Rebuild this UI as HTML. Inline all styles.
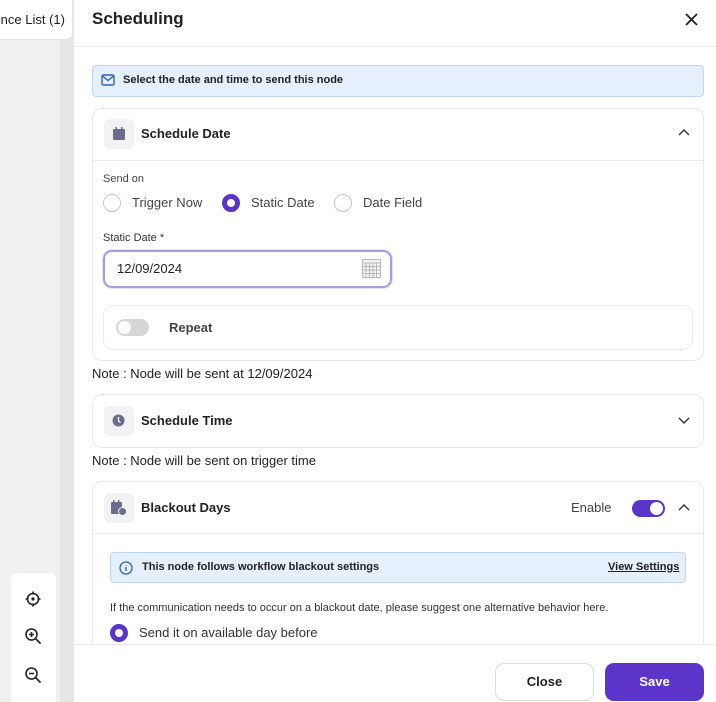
<!DOCTYPE html>
<html><head><meta charset="utf-8"><style>
*{box-sizing:border-box;margin:0;padding:0}
html,body{width:716px;height:702px;overflow:hidden}
body{background:#f0f0f0;font-family:"Liberation Sans",sans-serif;color:#222;position:relative}
.abs{position:absolute}
.card{position:absolute;left:92px;width:612px;border:1px solid #e8e8ec;border-radius:10px;background:#fff}
.ib{position:absolute;width:30px;height:30px;border-radius:6px;background:#f2f2f5}
.t{position:absolute;font-size:13px;font-weight:bold;color:#222}
.radio{position:absolute;width:18px;height:18px;border-radius:50%;border:1.5px solid #c8c8c8;background:#fff}
.radio.on{border:5px solid #5b35c9}
.lbl{position:absolute;font-size:13px;color:#444}
</style></head><body>
<div class="abs" style="left:60px;top:0;width:14px;height:702px;background:#e6e6e6"></div>
<div class="abs" style="left:0;top:0;width:72px;height:40px;background:#fff;border-radius:0 0 6px 0;border-bottom:1px solid #e2e2e2"></div>
<div class="abs" style="right:651px;top:12px;font-size:13px;color:#222;white-space:nowrap">ence List (1)</div>
<div class="abs" style="left:11px;top:573px;width:45px;height:135px;background:#fff;border-radius:6px"></div>
<svg class="abs" style="left:24px;top:590px" width="18" height="18" viewBox="0 0 18 18" fill="none" stroke="#222" stroke-width="1.6"><circle cx="9" cy="9" r="5.5"/><path d="M9 1.5v3M9 13.5v3M1.5 9h3M13.5 9h3"/><circle cx="9" cy="9" r="0.8" fill="#222"/></svg>
<svg class="abs" style="left:24px;top:627px" width="18" height="18" viewBox="0 0 18 18" fill="none" stroke="#222" stroke-width="1.6"><circle cx="7.5" cy="7.5" r="5.5"/><path d="M11.5 11.5l5 5M5 7.5h5M7.5 5v5"/></svg>
<svg class="abs" style="left:24px;top:666px" width="18" height="18" viewBox="0 0 18 18" fill="none" stroke="#222" stroke-width="1.6"><circle cx="7.5" cy="7.5" r="5.5"/><path d="M11.5 11.5l5 5M5 7.5h5"/></svg>

<div class="abs" style="left:74px;top:0;width:642px;height:702px;background:#fff"></div>
<div class="abs" style="left:92px;top:9px;font-size:17px;font-weight:bold;color:#222">Scheduling</div>
<svg class="abs" style="left:685px;top:13px" width="13" height="13" viewBox="0 0 13 13" stroke="#222" stroke-width="1.8"><path d="M1 1l11 11M12 1L1 12"/></svg>
<div class="abs" style="left:74px;top:46px;width:642px;height:1px;background:#ececec"></div>

<div class="abs" style="left:92px;top:65px;width:612px;height:32px;background:#e6f0fc;border:1px solid #bfd6f3;border-radius:4px"></div>
<svg class="abs" style="left:101px;top:74px" width="14" height="12" viewBox="0 0 14 12" fill="none" stroke="#2a62b8" stroke-width="1.4"><rect x="1" y="1" width="12" height="10" rx="1.5"/><path d="M1.5 2l5.5 4.5L12.5 2"/></svg>
<div class="abs" style="left:123px;top:74px;font-size:11px;font-weight:bold;color:#222">Select the date and time to send this node</div>

<div class="card" style="top:108px;height:253px"></div>
<div class="abs" style="left:93px;top:160px;width:610px;height:1px;background:#ececec"></div>
<div class="ib" style="left:104px;top:119px"></div>
<svg class="abs" style="left:113px;top:127px" width="12" height="14" viewBox="0 0 12 14" fill="#6b6b8f"><rect x="0" y="2" width="12" height="11" rx="1"/><rect x="2.5" y="0" width="1.5" height="3"/><rect x="8" y="0" width="1.5" height="3"/></svg>
<div class="t" style="left:141px;top:126px">Schedule Date</div>
<svg class="abs" style="left:678px;top:128px" width="12" height="8" viewBox="0 0 12 8" fill="none" stroke="#333" stroke-width="1.4"><path d="M1 7l5-5 5 5"/></svg>
<div class="abs" style="left:103px;top:173px;font-size:11px;color:#444">Send on</div>
<div class="radio" style="left:103px;top:194px"></div><div class="lbl" style="left:132px;top:195px">Trigger Now</div>
<div class="radio on" style="left:222px;top:194px"></div><div class="lbl" style="left:251px;top:195px">Static Date</div>
<div class="radio" style="left:334px;top:194px"></div><div class="lbl" style="left:363px;top:195px">Date Field</div>
<div class="abs" style="left:103px;top:232px;font-size:11px;color:#333">Static Date *</div>
<div class="abs" style="left:103px;top:250px;width:289px;height:38px;border:2px solid #a99be0;border-radius:9px;box-shadow:0 0 0 1px #e5dff8"></div>
<div class="abs" style="left:117px;top:261px;font-size:13px;color:#222">12/09/2024</div>
<svg class="abs" style="left:362px;top:259px" width="19" height="19" viewBox="0 0 19 19" fill="none" stroke="#aaa" stroke-width="0.8"><rect x="0.5" y="0.5" width="18" height="18" fill="#f4f4f4"/><path d="M0.5 4h18M0.5 7.5h18M0.5 11h18M0.5 14.5h18M4 4v14.5M7.5 4v14.5M11 4v14.5M14.5 4v14.5"/></svg>
<div class="abs" style="left:103px;top:305px;width:590px;height:45px;border:1px solid #ececf0;border-radius:10px"></div>
<div class="abs" style="left:116px;top:319px;width:33px;height:17px;border-radius:9px;background:#d6d6d6"></div>
<div class="abs" style="left:118px;top:321px;width:13px;height:13px;border-radius:50%;background:#fff"></div>
<div class="abs" style="left:169px;top:320px;font-size:13px;color:#444;font-weight:bold">Repeat</div>
<div class="abs" style="left:92px;top:366px;font-size:13px;color:#222">Note : Node will be sent at 12/09/2024</div>

<div class="card" style="top:394px;height:54px"></div>
<div class="ib" style="left:104px;top:406px"></div>
<svg class="abs" style="left:112px;top:414px" width="13" height="13" viewBox="0 0 13 13"><circle cx="6.5" cy="6.5" r="6" fill="#6b6b8f"/><path d="M6.5 3v4l2 1.5" stroke="#fff" stroke-width="1.3" fill="none"/></svg>
<div class="t" style="left:141px;top:413px">Schedule Time</div>
<svg class="abs" style="left:678px;top:417px" width="12" height="8" viewBox="0 0 12 8" fill="none" stroke="#333" stroke-width="1.4"><path d="M1 1l5 5 5-5"/></svg>
<div class="abs" style="left:92px;top:453px;font-size:13px;color:#222">Note : Node will be sent on trigger time</div>

<div class="card" style="top:481px;height:200px;border-bottom:none;border-radius:10px 10px 0 0"></div>
<div class="abs" style="left:93px;top:533px;width:610px;height:1px;background:#ececec"></div>
<div class="ib" style="left:104px;top:493px"></div>
<svg class="abs" style="left:111px;top:500px" width="16" height="16" viewBox="0 0 16 16" fill="#6b6b8f"><rect x="0" y="2" width="11" height="12" rx="1"/><rect x="2" y="0" width="1.5" height="3"/><rect x="7" y="0" width="1.5" height="3"/><circle cx="11.5" cy="11.5" r="4" fill="#6b6b8f" stroke="#f2f2f5" stroke-width="1"/></svg>
<div class="t" style="left:141px;top:500px">Blackout Days</div>
<div class="abs" style="left:571px;top:500px;font-size:13px;color:#444">Enable</div>
<div class="abs" style="left:632px;top:500px;width:33px;height:17px;border-radius:9px;background:#5b35c9"></div>
<div class="abs" style="left:650px;top:502px;width:13px;height:13px;border-radius:50%;background:#fff"></div>
<svg class="abs" style="left:678px;top:503px" width="12" height="8" viewBox="0 0 12 8" fill="none" stroke="#333" stroke-width="1.4"><path d="M1 7l5-5 5 5"/></svg>
<div class="abs" style="left:110px;top:552px;width:576px;height:31px;background:#e6f0fc;border:1px solid #bfd6f3;border-radius:4px"></div>
<svg class="abs" style="left:119px;top:561px" width="14" height="14" viewBox="0 0 14 14" fill="none" stroke="#2a62b8" stroke-width="1.3"><circle cx="7" cy="7" r="6"/><path d="M7 6v4M7 4v0.5"/></svg>
<div class="abs" style="left:142px;top:561px;font-size:11px;font-weight:bold;color:#222">This node follows workflow blackout settings</div>
<div class="abs" style="left:608px;top:561px;font-size:11px;font-weight:bold;color:#222;text-decoration:underline">View Settings</div>
<div class="abs" style="left:110px;top:602px;font-size:11px;color:#333">If the communication needs to occur on a blackout date, please suggest one alternative behavior here.</div>
<div class="radio on" style="left:110px;top:624px"></div>
<div class="lbl" style="left:139px;top:625px;color:#333">Send it on available day before</div>

<div class="abs" style="left:74px;top:644px;width:642px;height:58px;background:#fff;border-top:1px solid #ececec"></div>
<div class="abs" style="left:495px;top:663px;width:99px;height:38px;border:1px solid #ddd;border-radius:9px;background:#fff;text-align:center;line-height:36px;font-size:13px;font-weight:bold;color:#222">Close</div>
<div class="abs" style="left:605px;top:663px;width:99px;height:38px;border-radius:9px;background:#5b35c9;text-align:center;line-height:38px;font-size:13px;font-weight:bold;color:#fff">Save</div>
</body></html>
